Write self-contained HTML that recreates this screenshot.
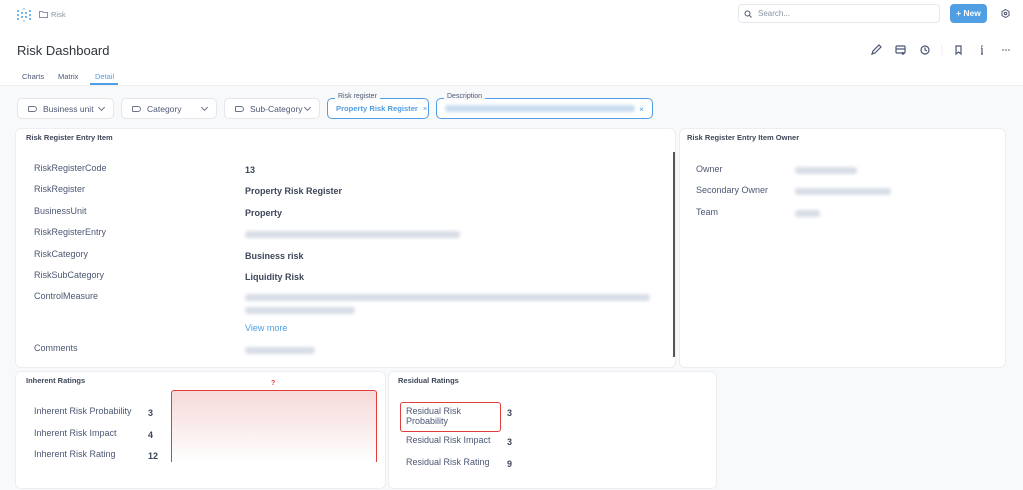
<!DOCTYPE html>
<html><head><meta charset="utf-8"><style>
*{box-sizing:border-box;margin:0;padding:0}
body{width:1023px;height:490px;overflow:hidden;font-family:"Liberation Sans",sans-serif;background:#f8f9fb;color:#4c5773;position:relative}
.a{position:absolute;white-space:nowrap}
.hdr{left:0;top:0;width:1023px;height:86px;background:#fff;border-bottom:1px solid #eef0f3}
.card{background:#fff;border:1px solid #eceef1;border-radius:6px}
.ct{font-size:7.5px;font-weight:bold;color:#3e4759}
.lb{font-size:9px;color:#4c5773}
.v{font-size:9px;font-weight:bold;color:#3e4759}
.blur{background:#d8dde6;filter:blur(1.5px);height:7px;border-radius:3px}
.flt{top:98px;height:21px;border:1px solid #e3e6ea;border-radius:5px;background:#fff;font-size:8.5px;color:#4c5773;display:flex;align-items:center;padding-left:10px}
.tag{display:inline-block;width:9px;height:6px;border:1px solid #6b7385;border-radius:1px 3px 3px 1px;margin-right:6px}
.chev{position:absolute;right:9px;top:6px;width:5px;height:5px;border-right:1px solid #6b7385;border-bottom:1px solid #6b7385;transform:rotate(45deg)}
.sel{border:1.5px solid #509ee3;color:#509ee3;font-weight:bold}
.sl{position:absolute;top:-6px;left:7px;background:#f8f9fb;padding:0 3px;font-size:7px;color:#4c5773;font-weight:normal}
</style></head><body>
<div class="a hdr"></div>
<svg class="a" style="left:17px;top:8px" width="14" height="14"><g fill="#509ee3"><circle cx="1" cy="3" r="1"/><circle cx="1" cy="7" r="1"/><circle cx="1" cy="11" r="1"/><circle cx="5" cy="5" r="1"/><circle cx="5" cy="9" r="1"/><circle cx="9" cy="5" r="1"/><circle cx="9" cy="9" r="1"/><circle cx="13" cy="3" r="1"/><circle cx="13" cy="7" r="1"/><circle cx="13" cy="11" r="1"/><circle cx="7" cy="1" r=".7"/><circle cx="7" cy="13" r=".7"/></g></svg>
<svg class="a" style="left:39px;top:10px" width="9" height="8"><path d="M.5 1.5h3l1 1h4v5h-8z" fill="none" stroke="#8a93a5"/></svg>
<div class="a" style="left:51px;top:10px;font-size:7.5px;color:#8a93a5">Risk</div>
<div class="a" style="left:738px;top:4px;width:202px;height:19px;border:1px solid #e6e8ec;border-radius:4px;background:#fff"></div>
<svg class="a" style="left:744px;top:10px" width="8" height="8"><circle cx="3.5" cy="3.5" r="2.5" fill="none" stroke="#4c5773"/><path d="M5.5 5.5L7.5 7.5" stroke="#4c5773"/></svg>
<div class="a" style="left:758px;top:9px;font-size:8px;color:#8a93a5">Search...</div>
<div class="a" style="left:950px;top:4px;width:37px;height:19px;background:#509ee3;border-radius:4px;color:#fff;font-size:8.5px;font-weight:bold;line-height:19px;text-align:center">+ New</div>
<svg class="a" style="left:1001px;top:9px" width="9" height="9"><path d="M4.5.5l3.5 2v4l-3.5 2-3.5-2v-4z" fill="none" stroke="#4c5773"/><circle cx="4.5" cy="4.5" r="1.3" fill="none" stroke="#4c5773"/></svg>
<div class="a" style="left:17px;top:43px;font-size:13px;color:#2e353b">Risk Dashboard</div>
<svg class="a" style="left:870px;top:43px;width:150px;height:14px" viewBox="0 0 150 14"><g fill="none" stroke="#4c5773" stroke-width="1.2"><path d="M2 11l1-3 6-6 2 2-6 6z"/><rect x="26" y="3" width="9" height="7" rx="1"/><path d="M26 6h9M33 9v3M31.5 10.5h3"/><circle cx="55" cy="7" r="4"/><path d="M55 4.5V7l2 1"/><path d="M86 3h5v8l-2.5-2-2.5 2z"/><path d="M112 5v6M111 5h1M111 11h2"/></g><circle cx="112" cy="3" r=".8" fill="#4c5773"/><g fill="#4c5773"><circle cx="133" cy="7" r=".8"/><circle cx="136" cy="7" r=".8"/><circle cx="139" cy="7" r=".8"/></g><path d="M72 2v10" stroke="#eceef1"/></svg>
<div class="a" style="left:22px;top:72px;font-size:7.5px;color:#4c5773">Charts</div>
<div class="a" style="left:58px;top:72px;font-size:7.5px;color:#4c5773">Matrix</div>
<div class="a" style="left:95px;top:72px;font-size:7.5px;color:#509ee3">Detail</div>
<div class="a" style="left:90px;top:83px;width:28px;height:1.5px;background:#509ee3"></div>

<div class="a flt" style="left:17px;width:97px"><span class="tag"></span>Business unit<span class="chev"></span></div>
<div class="a flt" style="left:121px;width:96px"><span class="tag"></span>Category<span class="chev"></span></div>
<div class="a flt" style="left:224px;width:96px"><span class="tag"></span>Sub-Category<span class="chev"></span></div>
<div class="a flt sel" style="left:327px;width:102px;padding-left:8px;font-size:7.6px"><span class="sl">Risk register</span>Property Risk Register<span style="margin-left:5px;font-weight:normal">×</span></div>
<div class="a flt sel" style="left:436px;width:217px;padding-left:8px"><span class="sl">Description</span><span class="blur" style="width:190px;background:#c9dcef"></span><span style="margin-left:4px;font-weight:normal">×</span></div>

<div class="a card" style="left:15px;top:128px;width:661px;height:240px"></div>
<div class="a ct" style="left:26px;top:133px">Risk Register Entry Item</div>
<div class="a" style="left:673px;top:152px;width:1.5px;height:205px;background:#555"></div>
<div class="a lb" style="left:34px;top:163px">RiskRegisterCode</div><div class="a v" style="left:245px;top:165px">13</div>
<div class="a lb" style="left:34px;top:184px">RiskRegister</div><div class="a v" style="left:245px;top:186px">Property Risk Register</div>
<div class="a lb" style="left:34px;top:206px">BusinessUnit</div><div class="a v" style="left:245px;top:208px">Property</div>
<div class="a lb" style="left:34px;top:227px">RiskRegisterEntry</div><div class="a blur" style="left:245px;top:231px;width:215px"></div>
<div class="a lb" style="left:34px;top:249px">RiskCategory</div><div class="a v" style="left:245px;top:251px">Business risk</div>
<div class="a lb" style="left:34px;top:270px">RiskSubCategory</div><div class="a v" style="left:245px;top:272px">Liquidity Risk</div>
<div class="a lb" style="left:34px;top:291px">ControlMeasure</div><div class="a blur" style="left:245px;top:294px;width:405px"></div><div class="a blur" style="left:245px;top:307px;width:110px"></div>
<div class="a" style="left:245px;top:323px;font-size:9px;color:#509ee3">View more</div>
<div class="a lb" style="left:34px;top:343px">Comments</div><div class="a blur" style="left:245px;top:347px;width:70px"></div>

<div class="a card" style="left:679px;top:128px;width:327px;height:240px"></div>
<div class="a ct" style="left:687px;top:133px">Risk Register Entry Item Owner</div>
<div class="a lb" style="left:696px;top:164px">Owner</div><div class="a blur" style="left:795px;top:167px;width:62px"></div>
<div class="a lb" style="left:696px;top:185px">Secondary Owner</div><div class="a blur" style="left:795px;top:188px;width:96px"></div>
<div class="a lb" style="left:696px;top:207px">Team</div><div class="a blur" style="left:795px;top:210px;width:25px"></div>

<div class="a card" style="left:15px;top:371px;width:371px;height:118px"></div>
<div class="a ct" style="left:26px;top:376px">Inherent Ratings</div>
<div class="a" style="left:171px;top:390px;width:206px;height:72px;border:1px solid #e23d3d;border-bottom:none;border-radius:3px 3px 0 0;background:linear-gradient(#f6d9d9,#fff)"></div>
<div class="a" style="left:271px;top:380px;font-size:7px;color:#e23d3d;font-weight:bold">?</div>
<div class="a lb" style="left:34px;top:406px">Inherent Risk Probability</div><div class="a v" style="left:148px;top:408px">3</div>
<div class="a lb" style="left:34px;top:428px">Inherent Risk Impact</div><div class="a v" style="left:148px;top:430px">4</div>
<div class="a lb" style="left:34px;top:449px">Inherent Risk Rating</div><div class="a v" style="left:148px;top:451px">12</div>

<div class="a card" style="left:388px;top:371px;width:329px;height:118px"></div>
<div class="a ct" style="left:398px;top:376px">Residual Ratings</div>
<div class="a" style="left:400px;top:402px;width:101px;height:30px;border:1.5px solid #e23d3d;border-radius:3px"></div>
<div class="a lb" style="left:406px;top:406px;line-height:10px">Residual Risk<br>Probability</div><div class="a v" style="left:507px;top:408px">3</div>
<div class="a lb" style="left:406px;top:435px">Residual Risk Impact</div><div class="a v" style="left:507px;top:437px">3</div>
<div class="a lb" style="left:406px;top:457px">Residual Risk Rating</div><div class="a v" style="left:507px;top:459px">9</div>
</body></html>
